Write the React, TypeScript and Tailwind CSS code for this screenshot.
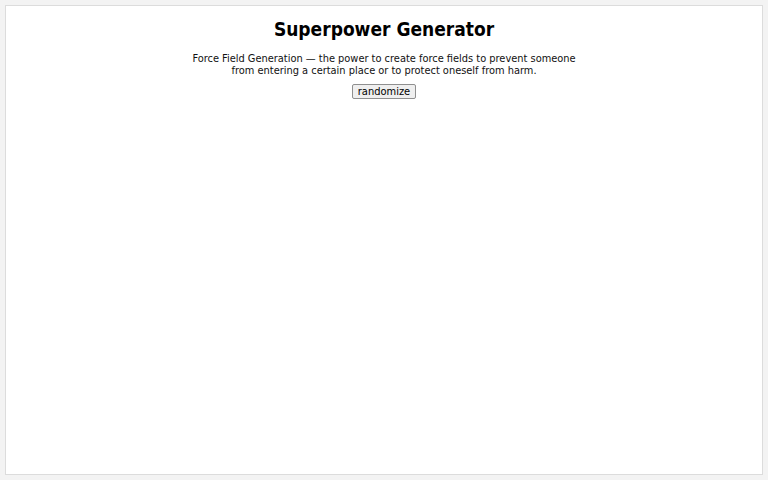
export default function App() {
  return (
    <div
      className="h-[480px] w-[768px] bg-[#f3f3f3] p-[5px]"
      style={{ fontFamily: '"DejaVu Sans Condensed", "DejaVu Sans", Verdana, sans-serif' }}
    >
      <div className="flex h-full flex-col items-center border border-[#dcdcdc] bg-white text-black">
        <h1 className="mt-[11px] text-[19px] font-bold leading-[24px] [font-stretch:condensed]">Superpower Generator</h1>
        <p className="mt-[12px] w-[400px] text-center text-[10.95px] leading-[12px] text-[#111] [font-stretch:condensed]">
          Force Field Generation — the power to create force fields to prevent someone from entering a certain place or to protect oneself from harm.
        </p>
        <button className="mt-[7px] rounded-[2px] border border-[#8f8f8f] bg-[#efefef] px-[5px] text-[11px] leading-[13px] [font-stretch:condensed]">
          randomize
        </button>
      </div>
    </div>
  );
}
